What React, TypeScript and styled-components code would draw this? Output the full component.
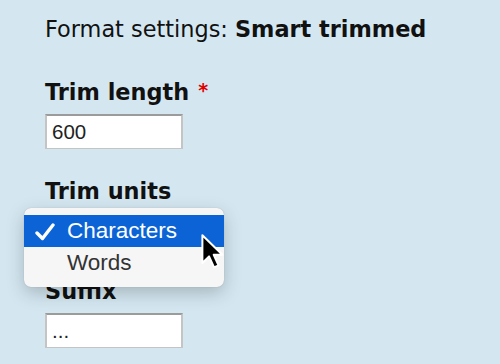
import styled, { createGlobalStyle } from "styled-components";

const GlobalStyle = createGlobalStyle`
  html, body {
    margin: 0;
    padding: 0;
    background: #d4e7f1;
  }
  body {
    width: 500px;
    height: 364px;
    overflow: hidden;
    font-family: "DejaVu Sans", Verdana, sans-serif;
    color: #111;
  }
`;

const Page = styled.div`
  padding: 16px 45px 0;
`;

const Summary = styled.div`
  font-size: 22.4px;
  line-height: 26px;
  b {
    font-weight: bold;
  }
`;

const FormItem = styled.div<{ $gap: number }>`
  margin-top: ${(props) => props.$gap}px;
`;

const Label = styled.label`
  display: block;
  font-size: 22.4px;
  line-height: 26px;
  font-weight: bold;
`;

const Required = styled.span`
  color: #e00000;
  font-size: 19px;
  margin-left: 9px;
  vertical-align: 3px;
`;

const TextInput = styled.input`
  display: block;
  box-sizing: border-box;
  width: 138px;
  height: 35px;
  margin-top: 9px;
  padding: 0 5px;
  border: 1px solid #c4c4c4;
  border-top: 2px solid #9b9b9b;
  border-left-width: 2px;
  border-right-width: 2px;
  background: #fff;
  font-family: "Liberation Sans", Arial, sans-serif;
  font-size: 20.5px;
  color: #222;
  outline: none;
`;

const SelectWrap = styled.div`
  position: relative;
  margin-top: 9px;
  width: 180px;
  height: 36px;
`;

const Popup = styled.ul`
  position: absolute;
  left: -21px;
  top: -5px;
  width: 200px;
  margin: 0;
  padding: 7px 0 8px;
  list-style: none;
  background: #f6f6f6;
  border-radius: 7px;
  box-shadow: 0 0 1px rgba(0, 0, 0, 0.25), 0 6px 18px rgba(0, 0, 0, 0.22);
`;

const Option = styled.li<{ $selected?: boolean }>`
  position: relative;
  height: 32px;
  line-height: 32px;
  padding-left: 43px;
  font-family: "Liberation Sans", Arial, sans-serif;
  font-size: 22.5px;
  color: ${(props) => (props.$selected ? "#fff" : "#333")};
  background: ${(props) => (props.$selected ? "#0b63d6" : "transparent")};
`;

const Check = styled.svg`
  position: absolute;
  left: 11px;
  top: 8px;
`;

const Cursor = styled.svg`
  position: absolute;
  left: 155px;
  top: 20px;
`;

export default function App() {
  return (
    <>
      <GlobalStyle />
      <Page>
        <Summary>
          Format settings: <b>Smart trimmed</b>
        </Summary>

        <FormItem $gap={35}>
          <Label>
            Trim length<Required>*</Required>
          </Label>
          <TextInput defaultValue="600" />
        </FormItem>

        <FormItem $gap={29}>
          <Label>Trim units</Label>
          <SelectWrap>
            <Popup>
              <Option $selected>
                <Check width="20" height="18" viewBox="0 0 20 18">
                  <path
                    d="M2 10 L7.5 15.5 L18 2"
                    fill="none"
                    stroke="#fff"
                    strokeWidth="3.4"
                    strokeLinecap="round"
                    strokeLinejoin="round"
                  />
                </Check>
                Characters
              </Option>
              <Option>Words</Option>
            </Popup>
            <Cursor width="27" height="40" viewBox="0 0 24 36">
              <path
                d="M2 2 L2 27 L8 21 L12.5 31 L16.5 29.2 L12.2 19.6 L20 19.6 Z"
                fill="#000"
                stroke="#fff"
                strokeWidth="1.8"
                strokeLinejoin="round"
              />
            </Cursor>
          </SelectWrap>
        </FormItem>

        <FormItem $gap={29}>
          <Label>Suffix</Label>
          <TextInput defaultValue="..." />
        </FormItem>
      </Page>
    </>
  );
}
